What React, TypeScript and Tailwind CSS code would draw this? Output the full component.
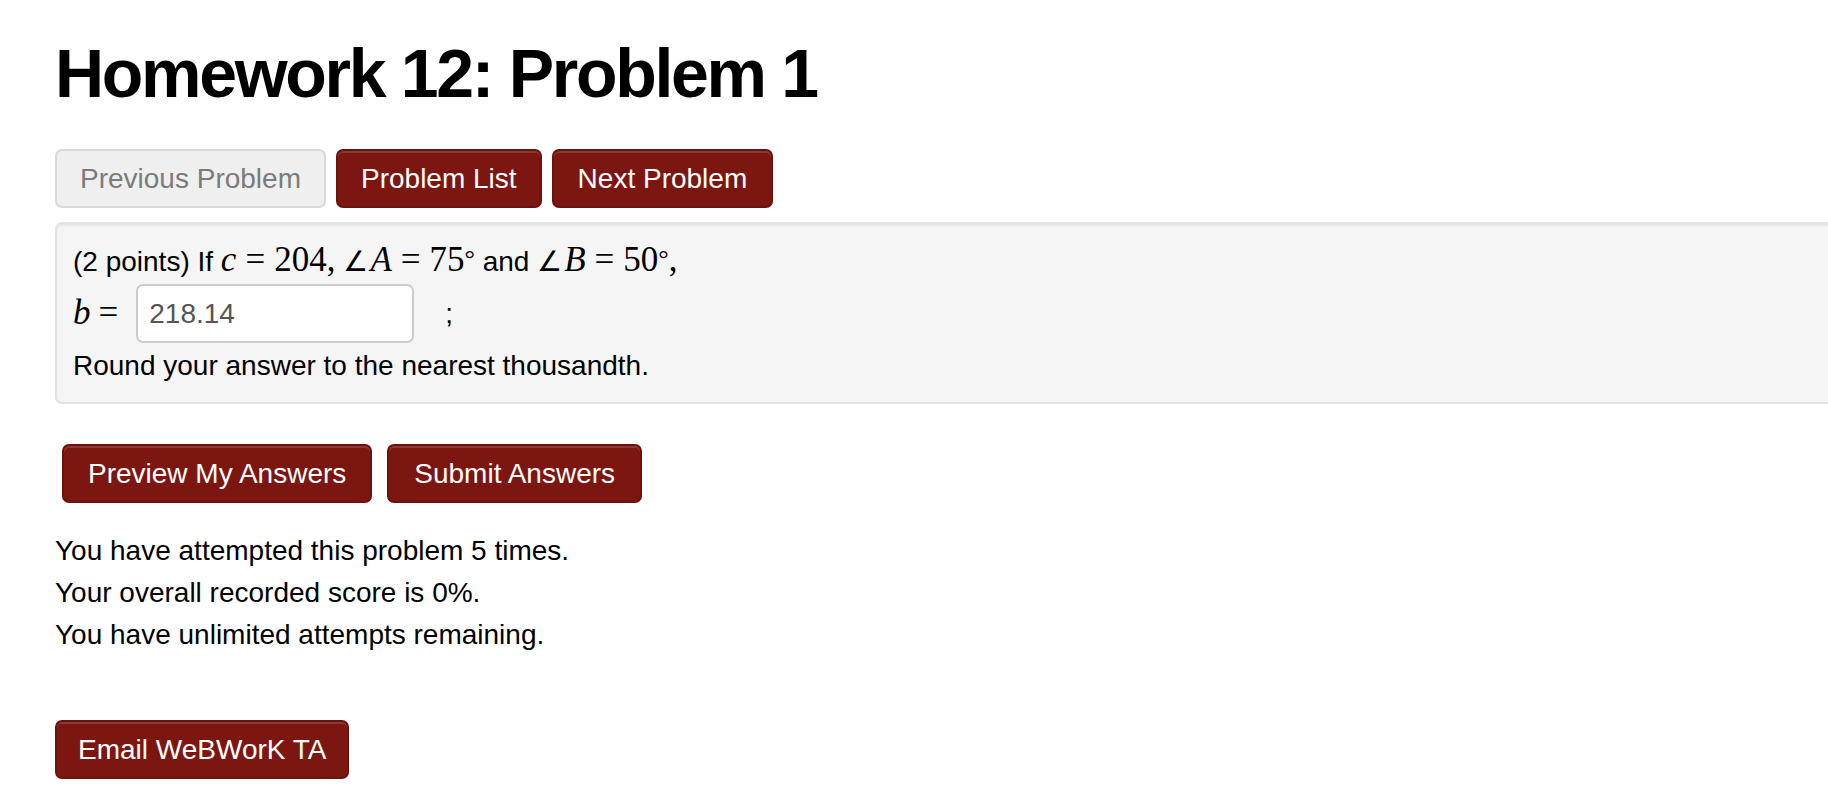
import React from "react";

const sans = { fontFamily: '"Liberation Sans", Arial, sans-serif' };
const serif = { fontFamily: '"Liberation Serif", "Times New Roman", serif' };

function RedButton({ children, className = "" }: { children: React.ReactNode; className?: string }) {
  return (
    <button
      className={`h-[59px] border-2 border-[#6a120d] rounded-[7px] bg-[#7c1610] text-white text-[28px] leading-none shadow-[inset_0_2px_0_rgba(255,255,255,0.15)] ${className}`}
    >
      {children}
    </button>
  );
}

function M({ children }: { children: React.ReactNode }) {
  return <span className="italic">{children}</span>;
}

function Eq() {
  return <span className="mx-[9px]">=</span>;
}

function Angle() {
  return <span className="text-[28px] mr-[2px]">∠</span>;
}

function Deg() {
  return <span className="text-[26px] relative -top-[4px]">°</span>;
}

export default function App() {
  return (
    <div className="min-h-screen bg-white overflow-hidden text-black" style={sans}>
      <div className="pl-[55px] pt-[35px]">
        <h1 className="text-[68px] font-bold leading-[77px] tracking-[-2.3px]">Homework 12: Problem 1</h1>

        <div className="flex gap-[10px] mt-[37px]">
          <button className="h-[59px] px-[23px] border-2 border-[#d9d9d9] rounded-[7px] bg-[#efefef] text-[#7b7b7b] text-[28px] leading-none">
            Previous Problem
          </button>
          <RedButton className="px-[23px]">Problem List</RedButton>
          <RedButton className="px-[24px]">Next Problem</RedButton>
        </div>

        <div className="mt-[14px] mr-[-40px] border-2 border-[#e3e3e3] rounded-[7px] bg-[#f5f5f5] shadow-[inset_0_2px_2px_rgba(0,0,0,0.06)] pl-[16px] pt-[14px] pb-[15px] text-[28px]">
          <div className="leading-[44px]">
            (2 points) If{" "}
            <span className="text-[35px]" style={serif}>
              <M>c</M>
              <Eq />
              204,<span className="ml-[8px]" />
              <Angle />
              <M>A</M>
              <Eq />
              75
              <Deg />
            </span>{" "}
            and{" "}
            <span className="text-[35px]" style={serif}>
              <Angle />
              <M>B</M>
              <Eq />
              50
              <Deg />,
            </span>
          </div>
          <div className="flex items-center h-[59px] -my-[1px]">
            <span className="text-[35px]" style={serif}>
              <M>b</M>
              <span className="ml-[8px]">=</span>
            </span>
            <div className="ml-[18px] w-[278px] h-[59px] border-2 border-[#cccccc] rounded-[7px] bg-white flex items-center pl-[11px] text-[#555555]">
              218.14
            </div>
            <span className="ml-[31px]">;</span>
          </div>
          <div className="leading-[42px] mt-[3px]">Round your answer to the nearest thousandth.</div>
        </div>

        <div className="flex gap-[15px] mt-[40px] ml-[7px]">
          <RedButton className="px-[24px]">Preview My Answers</RedButton>
          <RedButton className="px-[25px]">Submit Answers</RedButton>
        </div>

        <div className="mt-[27px] text-[28px] leading-[42px]">
          <div>You have attempted this problem 5 times.</div>
          <div>Your overall recorded score is 0%.</div>
          <div>You have unlimited attempts remaining.</div>
        </div>

        <div className="mt-[64px]">
          <RedButton className="px-[21px]">Email WeBWorK TA</RedButton>
        </div>
      </div>
    </div>
  );
}
